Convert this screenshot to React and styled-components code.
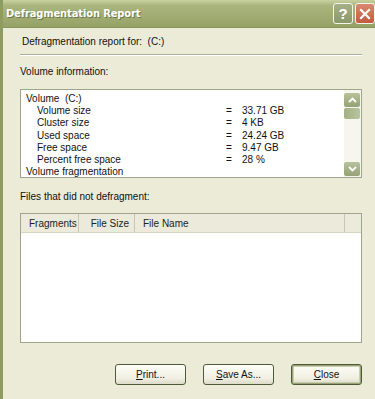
import React from "react"
import styled, { createGlobalStyle } from "styled-components"

const Global = createGlobalStyle`
  html, body { margin: 0; padding: 0; background: #ecebd8; }
  body { font-family: "Liberation Sans", Arial, sans-serif; }
`

const volumeRows = [
  { label: "Volume size", value: "33.71 GB" },
  { label: "Cluster size", value: "4 KB" },
  { label: "Used space", value: "24.24 GB" },
  { label: "Free space", value: "9.47 GB" },
  { label: "Percent free space", value: "28 %" },
]

export default function App() {
  return (
    <Window>
      <Global />
      <TitleBar>
        <Title>Defragmentation Report</Title>
        <Caps>
          <CapButton>?</CapButton>
          <CapButton close>
            <svg width="12" height="12" viewBox="0 0 12 12">
              <path d="M2 2 L10 10 M10 2 L2 10" stroke="#fff" strokeWidth="2.2" strokeLinecap="square" />
            </svg>
          </CapButton>
        </Caps>
      </TitleBar>
      <Body>
        <ReportFor>Defragmentation report for:&nbsp;&nbsp;(C:)</ReportFor>
        <Separator />
        <SectionLabel>Volume information:</SectionLabel>
        <InfoBox>
          <InfoLines>
            <Line>Volume&nbsp;&nbsp;(C:)</Line>
            {volumeRows.map((row) => (
              <Line key={row.label} indent>
                <Label>{row.label}</Label>
                <Eq>=</Eq>
                <span>{row.value}</span>
              </Line>
            ))}
            <Line>Volume fragmentation</Line>
          </InfoLines>
          <Scrollbar>
            <ScrollButton>
              <svg width="9" height="6" viewBox="0 0 9 6">
                <path d="M1 5 L4.5 1.5 L8 5" fill="none" stroke="#fff" strokeWidth="1.8" />
              </svg>
            </ScrollButton>
            <Thumb />
            <Track />
            <ScrollButton>
              <svg width="9" height="6" viewBox="0 0 9 6">
                <path d="M1 1 L4.5 4.5 L8 1" fill="none" stroke="#fff" strokeWidth="1.8" />
              </svg>
            </ScrollButton>
          </Scrollbar>
        </InfoBox>
        <SectionLabel second>Files that did not defragment:</SectionLabel>
        <ListBox>
          <Header>
            <HeadCell width="58px">Fragments</HeadCell>
            <HeadCell width="56px" right>File Size</HeadCell>
            <HeadCell width="210px">File Name</HeadCell>
            <HeadCell />
          </Header>
        </ListBox>
        <ButtonRow>
          <Button><u>P</u>rint...</Button>
          <Button><u>S</u>ave As...</Button>
          <Button focused><u>C</u>lose</Button>
        </ButtonRow>
      </Body>
    </Window>
  )
}

const Window = styled.div`
  width: 375px;
  height: 399px;
  display: flex;
  flex-direction: column;
  background: #ecebd8;
  border-left: 3px solid #8e9c62;
  box-sizing: border-box;
  overflow: hidden;
`

const TitleBar = styled.div`
  height: 28px;
  flex-shrink: 0;
  display: flex;
  align-items: center;
  justify-content: space-between;
  background: linear-gradient(to bottom, #c9d1a2 0%, #aab57e 20%, #a0ac72 60%, #95a267 100%);
  border-bottom: 1px solid #8a965c;
  margin-left: -3px;
  padding-left: 6px;
  box-sizing: border-box;
`

const Title = styled.span`
  color: #fff;
  font-family: "DejaVu Sans Condensed", "DejaVu Sans", sans-serif;
  font-weight: bold;
  font-size: 11px;
  letter-spacing: -0.1px;
  text-shadow: 1px 1px 0 #6e7a48;
`

const Caps = styled.div`
  display: flex;
  gap: 2px;
`

const CapButton = styled.div`
  width: 18px;
  height: 19px;
  border: 1px solid #f4f4ea;
  border-radius: 3px;
  display: flex;
  align-items: center;
  justify-content: center;
  color: #fff;
  font-weight: bold;
  font-size: 15px;
  font-family: "Liberation Sans", Arial, sans-serif;
  background: ${(p) => (p.close ? "linear-gradient(#d68a70, #c35a3e)" : "linear-gradient(#a6b088, #8b9868)")};
`

const Body = styled.div`
  flex: 1;
  display: flex;
  flex-direction: column;
  padding: 0 13px 0 17px;
  font-size: 10px;
  color: #111;
`

const ReportFor = styled.div`
  padding: 7px 0 0 2px;
  line-height: 13px;
`

const Separator = styled.div`
  height: 0;
  border-top: 1px solid #aeae9c;
  border-bottom: 1px solid #fff;
  margin-top: 6px;
`

const SectionLabel = styled.div`
  line-height: 13px;
  margin-top: ${(p) => (p.second ? "12px" : "9px")};
`

const InfoBox = styled.div`
  margin-top: 11px;
  height: 89px;
  background: #fff;
  border: 1px solid #9ea58a;
  display: flex;
  box-sizing: border-box;
`

const InfoLines = styled.div`
  flex: 1;
  padding: 3px 0 0 5px;
`

const Line = styled.div`
  display: flex;
  height: 12.2px;
  line-height: 12px;
  padding-left: ${(p) => (p.indent ? "11px" : "0")};
  white-space: nowrap;
`

const Label = styled.span`
  width: 189px;
`

const Eq = styled.span`
  width: 16px;
`

const Scrollbar = styled.div`
  width: 16px;
  display: flex;
  flex-direction: column;
  padding: 3px 1px 1px 0;
  background: #f6f6ee;
`

const ScrollButton = styled.div`
  height: 14px;
  border-radius: 2px;
  background: linear-gradient(#b7c29a, #94a274);
  display: flex;
  align-items: center;
  justify-content: center;
`

const Thumb = styled.div`
  height: 11px;
  margin-top: 1px;
  border-radius: 2px;
  background: linear-gradient(to right, #a3b084, #b8c49c);
`

const Track = styled.div`
  flex: 1;
`

const ListBox = styled.div`
  margin-top: 10px;
  height: 130px;
  background: #fff;
  border: 1px solid #9ea58a;
  box-sizing: border-box;
`

const Header = styled.div`
  display: flex;
  height: 18px;
  background: #ebeadb;
  border-bottom: 1px solid #d6d4c2;
`

const HeadCell = styled.div`
  width: ${(p) => p.width || "auto"};
  flex: ${(p) => (p.width ? "none" : "1")};
  display: flex;
  align-items: center;
  justify-content: ${(p) => (p.right ? "flex-end" : "flex-start")};
  padding: 0 ${(p) => (p.right ? "5px" : "0")} 0 ${(p) => (p.right ? "0" : "8px")};
  border-right: ${(p) => (p.width ? "1px solid #c9c7b4" : "none")};
  box-sizing: border-box;
  color: #222;
`

const ButtonRow = styled.div`
  display: flex;
  justify-content: flex-end;
  gap: 17px;
  margin-top: 21px;
`

const Button = styled.div`
  width: 71px;
  height: 21px;
  box-sizing: border-box;
  display: flex;
  align-items: center;
  justify-content: center;
  border: 1px solid #4d5a3a;
  border-radius: 3px;
  background: linear-gradient(#fefef8, #f0efe2 70%, #dcdac8);
  color: #111;
  box-shadow: ${(p) => (p.focused ? "inset 0 0 0 1px #9aa278, inset 0 0 0 2px #c9cfae" : "none")};
  u { text-decoration: underline; }
`
